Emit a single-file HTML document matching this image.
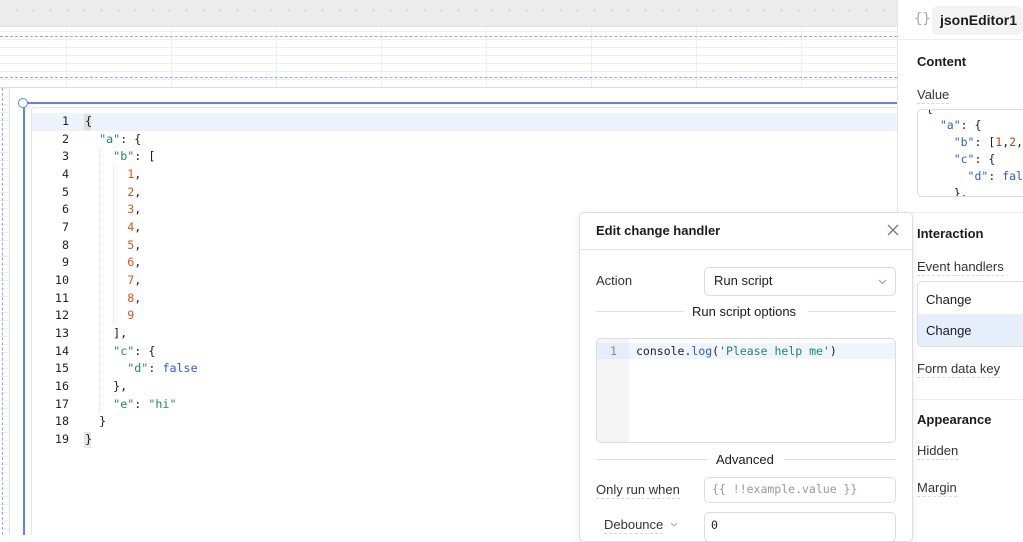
<!DOCTYPE html>
<html><head><meta charset="utf-8"><style>
*{box-sizing:border-box;margin:0;padding:0}
body{width:1023px;height:535px;overflow:hidden;background:#fff;font-family:"Liberation Sans",sans-serif;position:relative;color:#1c1c1c}
.abs{position:absolute}
.mono{font-family:"DejaVu Sans Mono","Liberation Mono",monospace}
.code{font-size:11.7px;line-height:17.67px;white-space:pre}
.s{color:#1f8a5c}.n{color:#d9561b}.k{color:#2b5bd7}
.lbl{font-size:13px;color:#333}
.ul{border-bottom:1px dashed #d8d8d8;padding-bottom:1px}
</style></head><body>
<div class="abs" style="left:0;top:0;width:897px;height:27px;background:#ececec;background-image:radial-gradient(#d2d2d2 1px,transparent 1.2px);background-size:17px 17px;background-position:8px 2px;border-bottom:1px solid #dcdcdc"></div>
<div class="abs" style="left:0;top:28px;width:897px;height:60px;background-image:linear-gradient(#eee 1px,transparent 1px),linear-gradient(90deg,#eee 1px,transparent 1px);background-size:105px 8px;background-position:66px 3px"></div>
<div class="abs" style="left:0;top:36px;width:897px;border-top:1px dashed #8fa8f0"></div>
<div class="abs" style="left:0;top:77px;width:897px;border-top:1px dashed #8fa8f0"></div>
<div class="abs" style="left:0;top:87px;width:897px;border-top:1px solid #ddd"></div>
<div class="abs" style="left:0;top:88px;width:10px;height:447px;background-image:linear-gradient(#eee 1px,transparent 1px);background-size:10px 8px;border-right:1px solid #e2e2e2"></div>
<div class="abs" style="left:2px;top:88px;height:447px;border-left:1px dashed #8fa8f0"></div>
<div class="abs" style="left:23px;top:102px;width:874px;height:2px;background:#5b84ec"></div>
<div class="abs" style="left:23px;top:102px;width:2px;height:433px;background:#5b84ec"></div>
<div class="abs" style="left:18px;top:98px;width:10px;height:10px;border:1.5px solid #5b84ec;border-radius:50%;background:#fff"></div>
<div class="abs" style="left:31px;top:107px;width:866px;height:428px;border-left:1px solid #e4e4e4;border-top:1px solid #e4e4e4;border-radius:4px 0 0 0"></div>
<div class="abs" style="left:32px;top:113px;width:865px;height:18px;background:#eef2fd"></div>
<div class="abs" style="left:84px;top:114px;width:7px;height:16px;background:#ddd"></div>
<div class="abs" style="left:84px;top:432px;width:7px;height:16px;background:#e6e6e6"></div>
<div class="abs mono code" style="left:40px;top:113px;width:29px;text-align:right;color:#222">1
2
3
4
5
6
7
8
9
10
11
12
13
14
15
16
17
18
19</div>
<div class="abs" style="left:99px;top:149px;height:264px;border-left:1px dotted #ddd"></div>
<div class="abs" style="left:113px;top:166px;height:159px;border-left:1px dotted #ddd"></div>
<div class="abs mono code" style="left:85px;top:113px">{
  <span class="s">"a"</span>: {
    <span class="s">"b"</span>: [
      <span class="n">1</span>,
      <span class="n">2</span>,
      <span class="n">3</span>,
      <span class="n">4</span>,
      <span class="n">5</span>,
      <span class="n">6</span>,
      <span class="n">7</span>,
      <span class="n">8</span>,
      <span class="n">9</span>
    ],
    <span class="s">"c"</span>: {
      <span class="s">"d"</span>: <span class="k">false</span>
    },
    <span class="s">"e"</span>: <span class="s">"hi"</span>
  }
}</div>

<div class="abs" style="left:897px;top:0;width:126px;height:535px;background:#fff;border-left:1px solid #e6e6e6"></div>
<div class="abs" style="left:898px;top:39px;width:125px;border-top:1px solid #eee"></div>
<div class="abs" style="left:932px;top:6px;width:91px;height:29px;background:#f3f3f3;border-radius:6px"></div>
<div class="abs mono" style="left:914px;top:11px;font-size:14px;color:#aaa">{}</div>
<div class="abs" style="left:940px;top:12px;font-size:14px;font-weight:bold;color:#1c1c1c">jsonEditor1</div>
<div class="abs" style="left:917px;top:54px;font-size:13px;font-weight:bold">Content</div>
<div class="abs lbl" style="left:917px;top:87px"><span class="ul">Value</span></div>
<div class="abs" style="left:917px;top:109px;width:110px;height:88px;border:1px solid #ddd;border-radius:5px;overflow:hidden">
<div class="mono" style="font-size:11.5px;line-height:17px;white-space:pre;margin:-10px 0 0 8px;color:#222">{
  <span class="k">"a"</span>: {
    <span class="k">"b"</span>: [<span style="color:#b3420b">1</span>,<span style="color:#b3420b">2</span>,<span style="color:#b3420b">3</span>
    <span class="k">"c"</span>: {
      <span class="k">"d"</span>: <span class="k">false</span>
    },</div></div>
<div class="abs" style="left:898px;top:212px;width:125px;border-top:1px solid #eee"></div>
<div class="abs" style="left:917px;top:226px;font-size:13px;font-weight:bold">Interaction</div>
<div class="abs lbl" style="left:917px;top:259px"><span class="ul">Event handlers</span></div>
<div class="abs" style="left:917px;top:281px;width:110px;height:66px;border:1px solid #ddd;border-radius:5px;overflow:hidden">
<div style="height:32px;padding:10px 0 0 8px;font-size:13px">Change</div>
<div style="height:32px;padding:9px 0 0 8px;font-size:13px;background:#e6eefc">Change</div></div>
<div class="abs lbl" style="left:917px;top:361px"><span class="ul">Form data key</span></div>
<div class="abs" style="left:898px;top:399px;width:125px;border-top:1px solid #eee"></div>
<div class="abs" style="left:917px;top:412px;font-size:13px;font-weight:bold">Appearance</div>
<div class="abs lbl" style="left:917px;top:443px"><span class="ul">Hidden</span></div>
<div class="abs lbl" style="left:917px;top:480px"><span class="ul">Margin</span></div>

<div class="abs" style="left:579px;top:212px;width:334px;height:330px;background:#fff;border:1px solid #ddd;border-radius:5px;box-shadow:0 2px 8px rgba(0,0,0,.08)"></div>
<div class="abs" style="left:580px;top:249px;width:332px;border-top:1px solid #e6e6e6"></div>
<div class="abs" style="left:596px;top:223px;font-size:13px;font-weight:bold">Edit change handler</div>
<svg class="abs" style="left:887px;top:224px" width="12" height="12" viewBox="0 0 12 12"><path d="M1 1L11 11M11 1L1 11" stroke="#777" stroke-width="1.3"/></svg>
<div class="abs lbl" style="left:596px;top:273px">Action</div>
<div class="abs" style="left:704px;top:267px;width:192px;height:29px;border:1px solid #ddd;border-radius:5px"></div>
<div class="abs" style="left:714px;top:273px;font-size:13px">Run script</div>
<svg class="abs" style="left:878px;top:279px" width="9" height="6" viewBox="0 0 9 6"><path d="M1 1L4.5 4.5L8 1" stroke="#999" fill="none" stroke-width="1"/></svg>
<div class="abs" style="left:596px;top:311px;width:88px;border-top:1px solid #e2e2e2"></div>
<div class="abs" style="left:808px;top:311px;width:88px;border-top:1px solid #e2e2e2"></div>
<div class="abs" style="left:692px;top:304px;font-size:13px">Run script options</div>
<div class="abs" style="left:596px;top:338px;width:300px;height:105px;border:1px solid #ddd;border-radius:5px;overflow:hidden">
<div style="position:absolute;left:0;top:0;width:32px;height:105px;background:#f5f5f5"></div>
<div style="position:absolute;left:0;top:4px;width:300px;height:16px;background:#f0f4fd"></div>
<div style="position:absolute;left:0;top:4px;width:32px;height:16px;background:#e6ecfb"></div>
<div class="mono" style="position:absolute;left:13px;top:4px;font-size:11.5px;line-height:16px;color:#888">1</div>
<div class="mono" style="position:absolute;left:39px;top:4px;font-size:11.5px;line-height:16px;white-space:pre;color:#222">console.<span class="k">log</span>(<span class="s">'Please help me'</span>)</div>
</div>
<div class="abs" style="left:596px;top:459px;width:112px;border-top:1px solid #e2e2e2"></div>
<div class="abs" style="left:784px;top:459px;width:112px;border-top:1px solid #e2e2e2"></div>
<div class="abs" style="left:716px;top:452px;font-size:13px">Advanced</div>
<div class="abs lbl" style="left:596px;top:482px"><span class="ul">Only run when</span></div>
<div class="abs" style="left:704px;top:477px;width:192px;height:26px;border:1px solid #ddd;border-radius:5px"></div>
<div class="abs mono" style="left:712px;top:482px;font-size:11.5px;color:#999">{{ !!example.value }}</div>
<div class="abs lbl" style="left:604px;top:517px"><span class="ul">Debounce</span></div>
<svg class="abs" style="left:670px;top:522px" width="8" height="5" viewBox="0 0 8 5"><path d="M1 1L4 4L7 1" stroke="#aaa" fill="none"/></svg>
<div class="abs" style="left:704px;top:512px;width:192px;height:30px;border:1px solid #ddd;border-radius:5px"></div>
<div class="abs mono" style="left:711px;top:518px;font-size:11.5px;color:#222">0</div>
</body></html>
